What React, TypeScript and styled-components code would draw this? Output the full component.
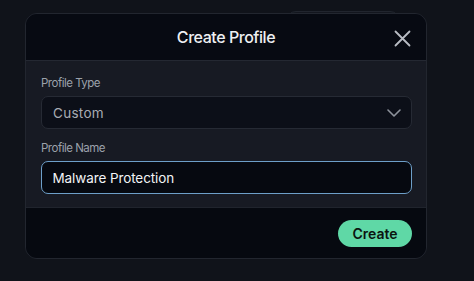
import React, { useState } from 'react';
import styled, { createGlobalStyle } from 'styled-components';

const GlobalStyle = createGlobalStyle`
    html, body {
        margin: 0;
        padding: 0;
        background: #12141c;
        font-family: Inter, "Noto Sans", sans-serif;
    }
`;

const Page = styled.div`
    width: 474px;
    height: 281px;
    position: relative;
    overflow: hidden;
    background: #12141c;
`;

const PageBar = styled.div`
    display: flex;
    justify-content: flex-end;
    padding: 11px 74px 0 0;
`;

const GhostButton = styled.div`
    width: 112px;
    height: 34px;
    border-radius: 10px;
    background: #161a22;
    border: 1px solid #2b313b;
`;

const Overlay = styled.div`
    position: absolute;
    inset: 0;
    padding: 13px 0 0 25px;
    background: rgba(14, 16, 22, 0.35);
`;

const Dialog = styled.div`
    width: 402px;
    border-radius: 12px;
    border: 1px solid #22262f;
    overflow: hidden;
    background: #171a23;
    box-sizing: border-box;
`;

const Header = styled.div`
    height: 47px;
    display: flex;
    align-items: center;
    justify-content: center;
    position: relative;
    background: #070a12;
    border-bottom: 1px solid #242832;
    box-sizing: border-box;
`;

const Title = styled.h3`
    margin: 0;
    font-size: 16px;
    font-weight: 500;
    color: #eef0f3;
    letter-spacing: -0.45px;
`;

const CloseButton = styled.button`
    position: absolute;
    right: 14px;
    top: 14px;
    width: 20px;
    height: 20px;
    padding: 0;
    border: none;
    background: none;
    display: flex;
    align-items: center;
    justify-content: center;
    cursor: pointer;
`;

const Body = styled.div`
    display: flex;
    flex-direction: column;
    padding: 14px 14px 13px 15px;
`;

const Field = styled.div`
    display: flex;
    flex-direction: column;
    gap: 5px;
    & + & {
        margin-top: 11px;
    }
`;

const Label = styled.label`
    font-size: 11.5px;
    line-height: 16px;
    color: #9ca1ab;
    letter-spacing: -0.5px;
`;

const SelectBox = styled.div`
    height: 33px;
    box-sizing: border-box;
    border-radius: 7px;
    border: 1px solid #262a34;
    background: #0c0f18;
    display: flex;
    align-items: center;
    justify-content: space-between;
    padding: 0 10px 0 11px;
    font-size: 13.5px;
    color: #a8acb4;
    letter-spacing: 0.3px;
`;

const TextInput = styled.input`
    height: 33px;
    box-sizing: border-box;
    border-radius: 7px;
    border: 1.5px solid #6d9fc9;
    background: #060910;
    padding: 0 10.5px;
    font-family: inherit;
    font-size: 13.5px;
    color: #f2f3f5;
    letter-spacing: -0.1px;
    outline: none;
`;

const Footer = styled.div`
    height: 51px;
    display: flex;
    align-items: center;
    justify-content: flex-end;
    padding: 0 14px;
    background: #060910;
    border-top: 1px solid #20242d;
    box-sizing: border-box;
`;

const PrimaryButton = styled.button`
    height: 27px;
    width: 74px;
    padding: 0;
    border: none;
    border-radius: 14px;
    background: #5fd8a6;
    color: #0b1410;
    font-family: inherit;
    font-size: 14px;
    font-weight: 600;
    cursor: pointer;
`;

export default function App() {
    const [name, setName] = useState('Malware Protection');

    return (
        <>
            <GlobalStyle />
            <Page>
                <PageBar>
                    <GhostButton />
                </PageBar>
                <Overlay>
                    <Dialog>
                        <Header>
                            <Title>Create Profile</Title>
                            <CloseButton aria-label="Close">
                                <svg width="17" height="17" viewBox="0 0 17 17">
                                    <path d="M1.5 1.5 L15.5 15.5 M15.5 1.5 L1.5 15.5" stroke="#b9bdc4" strokeWidth="1.8" strokeLinecap="round" />
                                </svg>
                            </CloseButton>
                        </Header>
                        <Body>
                            <Field>
                                <Label>Profile Type</Label>
                                <SelectBox>
                                    <span>Custom</span>
                                    <svg width="14" height="8" viewBox="0 0 14 8">
                                        <path d="M1 1 L7 7 L13 1" fill="none" stroke="#8d929b" strokeWidth="1.6" strokeLinecap="round" strokeLinejoin="round" />
                                    </svg>
                                </SelectBox>
                            </Field>
                            <Field>
                                <Label>Profile Name</Label>
                                <TextInput value={name} onChange={(e) => setName(e.target.value)} />
                            </Field>
                        </Body>
                        <Footer>
                            <PrimaryButton>Create</PrimaryButton>
                        </Footer>
                    </Dialog>
                </Overlay>
            </Page>
        </>
    );
}
